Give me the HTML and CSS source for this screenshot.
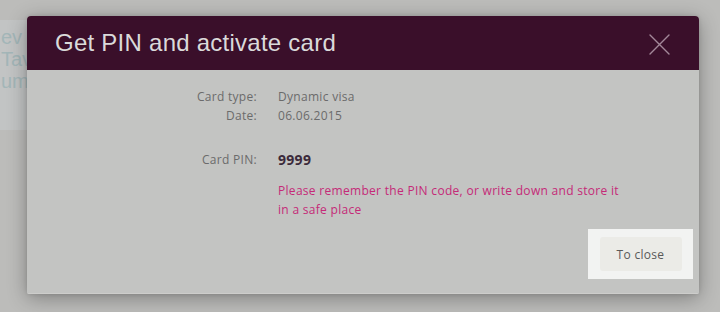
FILE: index.html
```html
<!DOCTYPE html>
<html lang="en">
<head>
<meta charset="utf-8">
<title>Get PIN and activate card</title>
<link rel="stylesheet" href="styles.css">
</head>
<body>
<div class="page">
  <div class="bg-card">
    <div class="bg-line">ev</div>
    <div class="bg-line">Tav</div>
    <div class="bg-line">um</div>
  </div>
</div>
<div class="overlay">
  <div class="modal">
    <div class="modal-header">
      <h1 class="modal-title">Get PIN and activate card</h1>
      <button class="close-x" aria-label="Close">
        <svg width="21" height="21" viewBox="0 0 21 21"><path d="M1 1 L20 20 M20 1 L1 20" stroke="#a38899" stroke-width="1.4" fill="none" stroke-linecap="round"/></svg>
      </button>
    </div>
    <div class="modal-body">
      <div class="info">
        <div class="row"><span class="label">Card type:</span><span class="value">Dynamic visa</span></div>
        <div class="row"><span class="label">Date:</span><span class="value">06.06.2015</span></div>
        <div class="row pin-row"><span class="label">Card PIN:</span><span class="value pin">9999</span></div>
        <div class="row msg-row"><span class="label"></span><span class="value msg">Please remember the PIN code, or write down and store it<br>in a safe place</span></div>
      </div>
      <div class="footer">
        <div class="focus-area"><button class="btn-close">To close</button></div>
      </div>
    </div>
  </div>
</div>
</body>
</html>
```
FILE: styles.css
```css
html, body {
  margin: 0;
  padding: 0;
  width: 720px;
  height: 312px;
  overflow: hidden;
  background: #bcbcba;
  font-family: "Open Sans", "Liberation Sans", Arial, sans-serif;
}

.page {
  padding-top: 20px;
}

.bg-card {
  width: 60px;
  height: 110px;
  background: #c2c4c4;
  padding-top: 6px;
  box-sizing: border-box;
}

.bg-line {
  font-family: "Liberation Sans", Arial, sans-serif;
  font-size: 20px;
  line-height: 22px;
  color: #a3b6b8;
  padding-left: 1px;
}

.overlay {
  position: fixed;
  inset: 0;
  padding: 16px 21px 0 27px;
}

.modal {
  width: 672px;
  height: 277px;
  display: flex;
  flex-direction: column;
  border-radius: 4px 4px 2px 2px;
  overflow: hidden;
  box-shadow: 0 4px 20px rgba(0, 0, 0, 0.32), 0 0 5px rgba(0, 0, 0, 0.12);
  border-bottom: 1px solid #cdcdcb;
}

.modal-header {
  height: 54px;
  background: #3a0f2a;
  display: flex;
  align-items: center;
  justify-content: space-between;
  padding: 0 29px 0 28px;
}

.modal-title {
  margin: 0;
  font-family: "Liberation Sans", Arial, sans-serif;
  font-weight: normal;
  font-size: 24px;
  letter-spacing: 0.25px;
  color: #dadada;
}

.close-x {
  background: none;
  border: 0;
  padding: 0;
  width: 21px;
  height: 21px;
  display: flex;
  margin-top: 2px;
}

.modal-body {
  flex: 1;
  background: #c3c4c2;
  display: flex;
  flex-direction: column;
  padding: 17px 6px 14px 0;
}

.info {
  display: grid;
  grid-template-columns: 230px auto;
  column-gap: 21px;
  font-size: 12px;
  letter-spacing: 0.3px;
  line-height: 19px;
  color: #6b6b6b;
}

.row {
  display: contents;
}

.label {
  text-align: right;
}

.pin-row .label,
.pin-row .value {
  margin-top: 25px;
}

.pin {
  font-size: 14px;
  font-weight: 700;
  color: #3b2a3a;
  letter-spacing: 0.3px;
}

.msg-row .value {
  margin-top: 12px;
}

.msg {
  color: #c52a78;
}

.footer {
  margin-top: auto;
  display: flex;
  justify-content: flex-end;
}

.focus-area {
  width: 105px;
  height: 50px;
  background: #f2f3f2;
  display: flex;
  align-items: center;
  justify-content: center;
}

.btn-close {
  width: 82px;
  height: 34px;
  border: 0;
  border-radius: 3px;
  background: #ebebe7;
  color: #595959;
  font-family: "Open Sans", "Liberation Sans", Arial, sans-serif;
  font-size: 12px;
  letter-spacing: 0.3px;
  padding: 0;
}
```
